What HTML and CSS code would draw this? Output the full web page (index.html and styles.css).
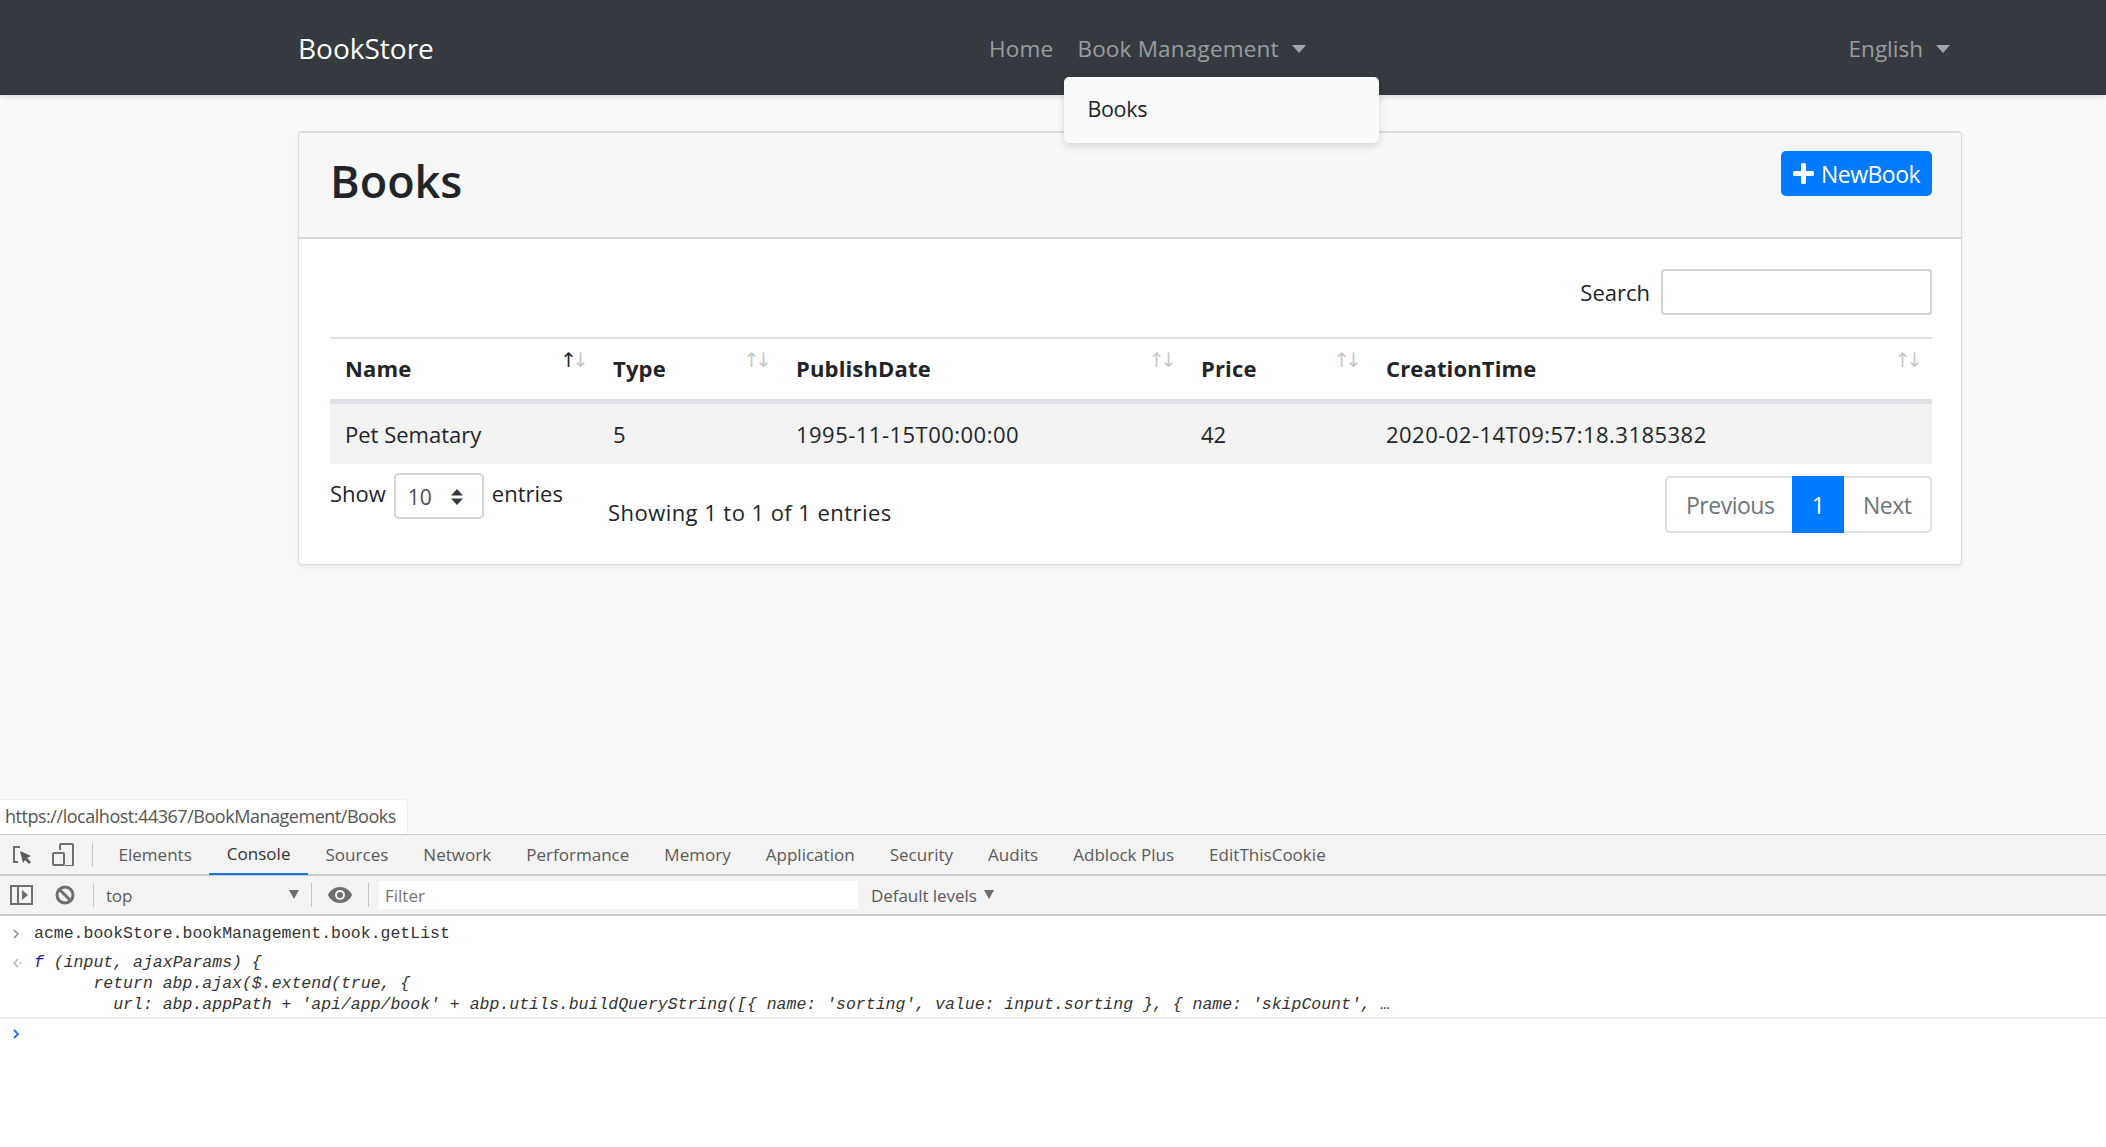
FILE: index.html
```html
<!DOCTYPE html>
<html lang="en">
<head>
<meta charset="utf-8">
<title>Books</title>
<link rel="stylesheet" href="styles.css">
</head>
<body>
<div class="viewport">
  <header class="navbar">
    <a class="brand">BookStore</a>
    <nav class="nav-main">
      <a class="nav-link home">Home</a>
      <div class="nav-item">
        <a class="nav-link">Book Management<span class="caret"></span></a>
        <div class="dropdown"><a class="dropdown-item">Books</a></div>
      </div>
    </nav>
    <a class="nav-link lang">English<span class="caret"></span></a>
  </header>
  <main class="content">
    <section class="card">
      <div class="card-header">
        <h2 class="title">Books</h2>
        <button class="btn-new">
          <svg class="plus" viewBox="0 0 21 21"><path d="M8 1.5a1.5 1.5 0 0 1 1.5-1.5h2a1.5 1.5 0 0 1 1.500 1.500V8h6.500a1.500 1.500 0 0 1 1.500 1.500v2a1.500 1.500 0 0 1-1.500 1.500H13v6.500a1.500 1.500 0 0 1-1.500 1.500h-2A1.500 1.500 0 0 1 8 19.500V13H1.500A1.500 1.500 0 0 1 0 11.500v-2A1.500 1.500 0 0 1 1.500 8H8z" fill="#fff"/></svg>NewBook
        </button>
      </div>
      <div class="card-body">
        <div class="search-row"><label class="search-label">Search</label><input class="search-input" type="text"></div>
        <table class="table">
          <colgroup><col class="c1"><col class="c2"><col class="c3"><col class="c4"><col class="c5"></colgroup>
          <thead>
            <tr><th class="sort asc">Name</th><th class="sort">Type</th><th class="sort">PublishDate</th><th class="sort">Price</th><th class="sort">CreationTime</th></tr>
          </thead>
          <tbody>
            <tr><td>Pet Sematary</td><td>5</td><td class="num">1995-11-15T00:00:00</td><td>42</td><td class="num">2020-02-14T09:57:18.3185382</td></tr>
          </tbody>
        </table>
        <div class="table-foot">
          <div class="length">
            <span>Show</span>
            <span class="select">10
              <svg class="select-arrows" viewBox="0 0 12 16"><path d="M6 0l6 6.500H0zM6 16L0 9.500h12z" fill="#343a40"/></svg>
            </span>
            <span>entries</span>
          </div>
          <div class="info">Showing 1 to 1 of 1 entries</div>
          <div class="pagination"><a class="page first">Previous</a><a class="page active">1</a><a class="page last">Next</a></div>
        </div>
      </div>
    </section>
    <div class="status-url">https://localhost:44367/BookManagement/Books</div>
  </main>
  <section class="devtools">
    <div class="dt-tabs">
      <svg class="ic-inspect" viewBox="0 0 20 18"><path d="M7 1H1v15h4" fill="none" stroke="#6e6e6e" stroke-width="2"/><path d="M7 5l11 5-4 2 4 4-2 2-4-4-2 3z" fill="#5a5a5a"/></svg>
      <svg class="ic-device" viewBox="0 0 22 23"><path d="M8 7V2a1 1 0 0 1 1-1h11a1 1 0 0 1 1 1v20a1 1 0 0 1-1 1h-7" fill="none" stroke="#6e6e6e" stroke-width="2"/><rect x="1" y="10" width="11" height="12" rx="1" fill="none" stroke="#6e6e6e" stroke-width="2"/></svg>
      <span class="dt-divider first"></span>
      <a class="tab">Elements</a><a class="tab on">Console</a><a class="tab">Sources</a><a class="tab">Network</a><a class="tab">Performance</a><a class="tab">Memory</a><a class="tab">Application</a><a class="tab">Security</a><a class="tab">Audits</a><a class="tab">Adblock Plus</a><a class="tab">EditThisCookie</a>
    </div>
    <div class="dt-bar">
      <svg class="ic-sidebar" viewBox="0 0 23 20"><rect x="1" y="1" width="21" height="18" fill="none" stroke="#6e6e6e" stroke-width="2"/><path d="M8 1v18" stroke="#6e6e6e" stroke-width="2"/><path d="M12 5l6 5-6 5z" fill="#6e6e6e"/></svg>
      <svg class="ic-block" viewBox="0 0 20 20"><circle cx="10" cy="10" r="8" fill="none" stroke="#6e6e6e" stroke-width="3"/><path d="M4.500 4.500l11 11" stroke="#6e6e6e" stroke-width="3"/></svg>
      <span class="dt-divider first bar-first"></span>
      <span class="ctx">top</span>
      <svg class="tri" viewBox="0 0 10 9"><path d="M0 0h10L5 9z" fill="#6e6e6e"/></svg>
      <span class="dt-divider d2"></span>
      <svg class="ic-eye" viewBox="0 0 24 16"><path d="M12 0C6.500 0 2 3.300 0 8c2 4.700 6.500 8 12 8s10-3.300 12-8c-2-4.700-6.500-8-12-8z" fill="#6e6e6e"/><circle cx="12" cy="8" r="5" fill="#f3f3f3"/><circle cx="12" cy="8" r="3" fill="#6e6e6e"/></svg>
      <span class="dt-divider d3"></span>
      <div class="filter">Filter</div>
      <span class="levels">Default levels</span>
      <svg class="tri t2" viewBox="0 0 10 9"><path d="M0 0h10L5 9z" fill="#6e6e6e"/></svg>
    </div>
    <div class="console">
      <div class="msg in"><svg class="gut" viewBox="0 0 7 10"><path d="M1 1l4 4-4 4" fill="none" stroke="#8a8a8a" stroke-width="1.500"/></svg><span class="code">acme.bookStore.bookManagement.book.getList</span></div>
      <div class="msg out"><svg class="gut lt" viewBox="0 0 9 10"><path d="M5 1L1 5l4 4" fill="none" stroke="#b5b5b5" stroke-width="1.500"/><circle cx="7.500" cy="5" r="1" fill="#b5b5b5"/></svg><div class="code-lines"><div class="code it"><span class="fn">f</span> <span>(input, ajaxParams) {</span></div><div class="code it">      return abp.ajax($.extend(true, {</div><div class="code it">        url: abp.appPath + 'api/app/book' + abp.utils.buildQueryString([{ name: 'sorting', value: input.sorting }, { name: 'skipCount', …</div></div></div>
      <div class="msg prompt"><svg class="gut" viewBox="0 0 7 10"><path d="M1 1l4 4-4 4" fill="none" stroke="#2f75e0" stroke-width="2"/></svg></div>
    </div>
  </section>
</div>
</body>
</html>
```
FILE: styles.css
```css
* { box-sizing: border-box; }
html, body { margin: 0; padding: 0; }
body { font-family: "Open Sans", "Liberation Sans", sans-serif; color: #212529; background: #f8f9fa; }
.viewport { height: 1147px; display: flex; flex-direction: column; overflow: hidden; }

.navbar { flex: 0 0 95px; background: #343a40; display: flex; align-items: center; padding: 0 156px 0 298px; box-shadow: 0 2px 6px rgba(0,0,0,.12); position: relative; z-index: 2; }
.brand { flex: 0 0 691px; color: #fff; font-size: 28px; }
.nav-main { display: flex; align-items: center; margin-top: 1px; }
.nav-link { color: rgba(255,255,255,.5); font-size: 22.500px; letter-spacing: .2px; white-space: nowrap; }
.home { margin-right: 24px; }
.nav-item { position: relative; }
.lang { margin-left: auto; margin-top: 1px; letter-spacing: 0; }
.caret { display: inline-block; width: 0; height: 0; margin-left: 13px; vertical-align: 4px; border-top: 8px solid rgba(255,255,255,.55); border-left: 7px solid transparent; border-right: 7px solid transparent; }
.dropdown { position: absolute; left: -13px; top: 44px; width: 315px; height: 66px; background: #f8f9fa; border-radius: 5px; box-shadow: 0 3px 8px rgba(0,0,0,.14); display: flex; align-items: center; padding: 0 0 3px 23px; }
.dropdown-item { color: #212529; font-size: 21.500px; letter-spacing: -.3px; }

.content { flex: 1; padding-top: 36px; padding-left: 298px; position: relative; }
.card { width: 1664px; background: #fff; border: 1px solid #dcdcdc; border-top-width: 2px; border-radius: 4px; box-shadow: 0 2px 4px rgba(0,0,0,.075); }
.card-header { height: 106px; background: #f7f7f7; border-bottom: 2px solid #d8d8d8; border-radius: 4px 4px 0 0; display: flex; justify-content: space-between; padding: 18px 29px 0 31px; }
.title { margin: 0; font-size: 45px; font-weight: 600; line-height: 60px; }
.btn-new { width: 151px; height: 45px; border: 0; border-radius: 5px; background: #007bff; color: #fff; font-family: inherit; font-size: 23px; letter-spacing: -.5px; display: flex; align-items: center; justify-content: center; gap: 7px; padding: 0; }
.plus { width: 21px; height: 21px; flex: none; }

.card-body { padding: 30px 29px 31px 31px; }
.search-row { display: flex; justify-content: flex-end; align-items: center; gap: 11px; height: 46px; margin-bottom: 22px; }
.search-label { font-size: 22px; }
.search-input { width: 271px; height: 46px; border: 2px solid #ced4da; border-radius: 4px; background: #fff; padding: 0; }

.table { width: 1602px; border-collapse: separate; border-spacing: 0; table-layout: fixed; border-top: 2px solid #dee2e6; font-size: 22px; }
.c1 { width: 268px; } .c2 { width: 183px; } .c3 { width: 405px; } .c4 { width: 185px; } .c5 { width: 561px; }
th { height: 65px; text-align: left; padding: 0 15px 2px; font-weight: 700; letter-spacing: .15px; border-bottom: 5px solid #dee2e6; position: relative; }
td { height: 60px; padding: 0 15px; background: #f2f2f2; }
td.num { letter-spacing: .48px; }
.sort::before, .sort::after { position: absolute; top: 8px; font: 400 20px/26px "DejaVu Sans", sans-serif; color: #212529; opacity: .25; letter-spacing: 0; }
.sort::before { content: "\2191"; right: 21px; }
.sort::after { content: "\2193"; right: 9px; }
.asc::before { opacity: 1; }

.table-foot { display: flex; align-items: flex-start; font-size: 22px; }
.length { flex: 0 0 278px; display: flex; align-items: flex-start; gap: 8px; padding-top: 8px; line-height: 42px; white-space: nowrap; }
.select { position: relative; display: block; width: 90px; height: 46px; margin-top: 1px; border: 2px solid #ced4da; border-radius: 5px; background: #fff; color: #495057; padding-left: 12px; font-size: 21px; line-height: 44px; }
.select-arrows { position: absolute; right: 19px; top: 14px; width: 12px; height: 16px; }
.info { padding-top: 28px; line-height: 40px; letter-spacing: .45px; }
.pagination { margin-left: auto; margin-top: 12px; display: flex; height: 57px; }
.page { display: flex; align-items: center; color: #6c757d; border: 2px solid #dee2e6; background: #fff; font-size: 23px; letter-spacing: -.5px; padding: 0 19px; }
.first { border-right: 0; border-radius: 5px 0 0 5px; width: 127px; }
.active { background: #007bff; color: #fff; border-color: #007bff; width: 52px; justify-content: center; padding: 0; }
.last { border-left: 0; border-radius: 0 5px 5px 0; width: 88px; }

.status-url { position: absolute; left: 0; bottom: 0; width: 408px; height: 35px; background: #fff; border: 1px solid #eee; border-width: 1px 1px 0 0; border-radius: 0 5px 0 0; color: #555; font-size: 18px; line-height: 33px; padding-left: 5px; letter-spacing: -.47px; white-space: nowrap; }

.devtools { flex: 0 0 313px; background: #fff; border-top: 1px solid #ccc; font-size: 17px; color: #5a5a5a; }
.dt-tabs { height: 41px; background: #f3f3f3; border-bottom: 2px solid #ccc; display: flex; align-items: center; padding-left: 13px; }
.ic-inspect { width: 20px; height: 18px; flex: none; }
.ic-device { width: 22px; height: 23px; flex: none; margin-left: 19px; }
.dt-divider { flex: none; width: 1px; height: 24px; background: #c4c4c4; }
.dt-divider.first { margin: 0 8px 0 18px; }
.dt-divider.bar-first { margin-right: 9px; }
.tab { flex: none; height: 39px; line-height: 40px; padding: 0 17.500px; letter-spacing: .02px; white-space: nowrap; }
.tab.on { color: #333; border-bottom: 2px solid #1a73e8; height: 41px; }
.dt-bar { height: 40px; background: #f3f3f3; border-bottom: 2px solid #ccc; display: flex; align-items: center; padding-left: 10px; }
.ic-sidebar { width: 23px; height: 20px; flex: none; }
.ic-block { width: 20px; height: 20px; flex: none; margin-left: 22px; }
.ctx { margin-left: 3px; width: 183px; letter-spacing: -.2px; }
.tri { width: 10px; height: 9px; flex: none; margin-bottom: 1px; }
.dt-divider.d2 { margin-left: 12px; }
.ic-eye { width: 24px; height: 16px; flex: none; margin-left: 16px; }
.dt-divider.d3 { margin-left: 16px; margin-right: 10px; }
.filter { width: 479px; height: 28px; background: #fff; color: #757575; line-height: 30px; padding-left: 6px; }
.levels { margin-left: 13px; letter-spacing: -.05px; }
.t2 { margin-left: 7px; }

.console { background: #fff; }
.msg { display: flex; padding-left: 13px; }
.gut { width: 7px; height: 10px; flex: none; }
.code-lines { flex: none; }
.code { margin: 0 0 0 14px; font: 16.500px/20.800px "Liberation Mono", monospace; color: #333; white-space: pre; }
.it { font-style: italic; }
.fn { color: #1a1aa6; }
.in { padding-top: 7px; height: 34px; align-items: center; padding-bottom: 5px; }
.out { padding-top: 3px; height: 69px; border-bottom: 2px solid #f0f0f0; align-items: flex-start; }
.lt { width: 9px; margin-top: 5px; margin-right: -2px; }
.prompt { padding-top: 10px; }
```
